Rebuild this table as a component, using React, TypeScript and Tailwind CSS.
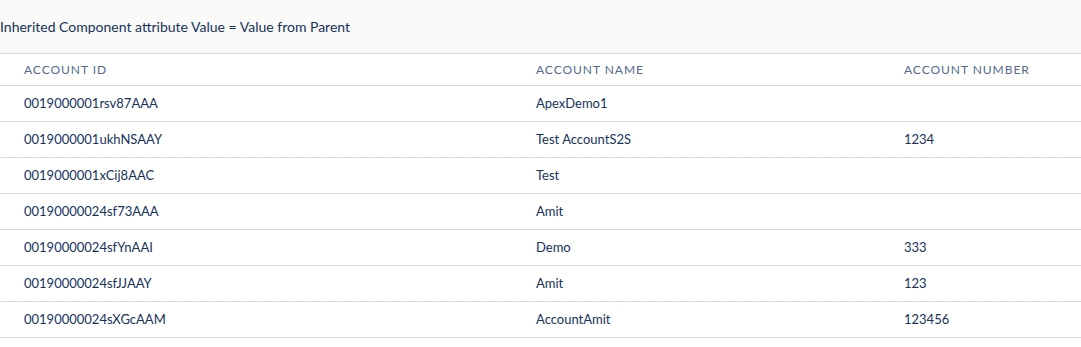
import React from "react";

const accounts = [
  { id: "0019000001rsv87AAA", name: "ApexDemo1", number: "" },
  { id: "0019000001ukhNSAAY", name: "Test AccountS2S", number: "1234" },
  { id: "0019000001xCij8AAC", name: "Test", number: "" },
  { id: "00190000024sf73AAA", name: "Amit", number: "" },
  { id: "00190000024sfYnAAI", name: "Demo", number: "333" },
  { id: "00190000024sfJJAAY", name: "Amit", number: "123" },
  { id: "00190000024sXGcAAM", name: "AccountAmit", number: "123456" },
];

const App: React.FC = () => {
  return (
    <div className="w-[1081px] min-h-[347px] bg-white font-['Lato',sans-serif] text-[13px] text-[#16325c]">
      {/* Header */}
      <div className="h-[54px] flex items-center bg-[#fafaf9] border-b border-[#dddbda]">
        <span className="text-[14px] text-[#16325c]">
          Inherited Component attribute Value = Value from Parent
        </span>
      </div>
      {/* Table */}
      <div className="grid grid-cols-[512px_368px_1fr] h-[32px] items-center border-b border-[#dddbda] text-[12px] uppercase tracking-[0.08em] text-[#54698d]">
        <div className="pl-6">Account Id</div>
        <div className="pl-6">Account Name</div>
        <div className="pl-6">Account Number</div>
      </div>
      {accounts.map((a) => (
        <div
          key={a.id}
          className="grid grid-cols-[512px_368px_1fr] h-[36px] items-center border-b border-[#dddbda]"
        >
          <div className="pl-6">{a.id}</div>
          <div className="pl-6">{a.name}</div>
          <div className="pl-6">{a.number}</div>
        </div>
      ))}
    </div>
  );
};

export default App;
